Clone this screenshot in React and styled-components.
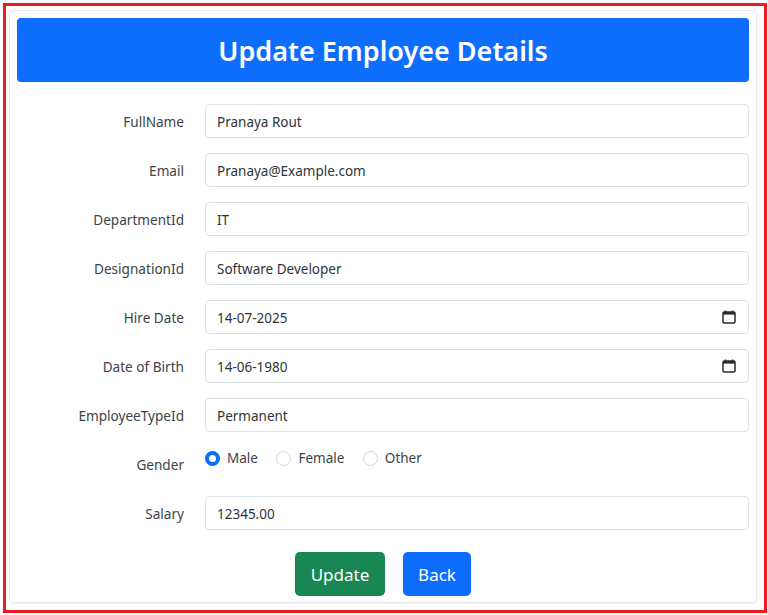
import React from 'react';
import styled, { createGlobalStyle } from 'styled-components';

const GlobalStyle = createGlobalStyle`
  html, body {
    margin: 0;
    padding: 0;
    background: #fff;
  }
  * {
    box-sizing: border-box;
  }
`

const Frame = styled.div`
  width: 764px;
  height: 610px;
  margin: 3px 0 0 3px;
  padding: 4px 7px 7px 3px;
  border: 3px solid #ed1c24;
  font-family: "Noto Sans", "Open Sans", sans-serif;
  color: #212529;
`

const Card = styled.div`
  height: 100%;
  padding: 7px;
  border: 1px solid #e6e8ea;
  border-radius: 4px;
  box-shadow: 0 1px 2px rgba(0, 0, 0, 0.06);
`

const Header = styled.h1`
  margin: 0 0 22px;
  height: 64px;
  display: flex;
  align-items: center;
  justify-content: center;
  background: #0d6efd;
  border-radius: 4px;
  color: #fff;
  font-size: 27px;
  font-weight: 600;
`

const Form = styled.form`
  display: grid;
  grid-template-columns: 167px 1fr;
  column-gap: 21px;
  row-gap: 15px;
`

const Label = styled.label`
  display: flex;
  align-items: center;
  justify-content: flex-end;
  height: 34px;
  font-size: 13.6px;
  color: #3d4348;
  ${props => props.$low && 'padding-top: 1px;'}
`

const InputWrap = styled.div`
  position: relative;
`

const Input = styled.input`
  display: block;
  width: 100%;
  height: 34px;
  padding: 1px 11px 0;
  border: 1px solid #dee2e6;
  border-radius: 4px;
  background: #fff;
  font-family: inherit;
  font-size: 13.5px;
  color: #2f3439;
  outline: none;
`

const CalendarIcon = styled.svg`
  position: absolute;
  top: 10px;
  right: 13px;
  width: 14px;
  height: 14px;
`

const Radios = styled.div`
  display: flex;
  align-items: flex-start;
  gap: 18.5px;
  height: 34px;
`

const RadioItem = styled.label`
  display: flex;
  align-items: center;
  gap: 7px;
  height: 22px;
  font-size: 13.5px;
  color: #3d4348;
`

const Radio = styled.input`
  appearance: none;
  margin: 0;
  width: 15px;
  height: 15px;
  border-radius: 50%;
  border: 1px solid #ced4da;
  background: #fff;

  &:checked {
    border: 4px solid #0d6efd;
  }
`

const Actions = styled.div`
  display: flex;
  justify-content: center;
  gap: 18px;
  margin-top: 22px;
`

const Button = styled.button`
  height: 44px;
  width: ${props => props.$width}px;
  padding: 0;
  border: none;
  border-radius: 5px;
  background: ${props => props.$color};
  color: #fff;
  font-family: inherit;
  font-size: 17px;
`

function Calendar() {
  return (
    <CalendarIcon viewBox="0 0 14 14" fill="none">
      <path d="M3.5 0.5v2M10.5 0.5v2" stroke="#2b2b2b" strokeWidth="1.4" />
      <rect x="1" y="2" width="12" height="11" rx="1.2" stroke="#2b2b2b" strokeWidth="1.5" />
      <rect x="1" y="2" width="12" height="2.6" fill="#2b2b2b" />
    </CalendarIcon>
  )
}

const fields = [
  { label: 'FullName', value: 'Pranaya Rout' },
  { label: 'Email', value: 'Pranaya@Example.com' },
  { label: 'DepartmentId', value: 'IT' },
  { label: 'DesignationId', value: 'Software Developer' },
  { label: 'Hire Date', value: '14-07-2025', date: true },
  { label: 'Date of Birth', value: '14-06-1980', date: true },
  { label: 'EmployeeTypeId', value: 'Permanent' },
]

export default function App() {
  return (
    <>
      <GlobalStyle />
      <Frame>
        <Card>
          <Header>Update Employee Details</Header>
          <Form onSubmit={e => e.preventDefault()}>
            {fields.map(f => (
              <React.Fragment key={f.label}>
                <Label>{f.label}</Label>
                <InputWrap>
                  <Input defaultValue={f.value} />
                  {f.date && <Calendar />}
                </InputWrap>
              </React.Fragment>
            ))}
            <Label $low>Gender</Label>
            <Radios>
              <RadioItem><Radio type="radio" name="gender" defaultChecked />Male</RadioItem>
              <RadioItem><Radio type="radio" name="gender" />Female</RadioItem>
              <RadioItem><Radio type="radio" name="gender" />Other</RadioItem>
            </Radios>
            <Label>Salary</Label>
            <InputWrap>
              <Input defaultValue="12345.00" />
            </InputWrap>
          </Form>
          <Actions>
            <Button $color="#198754" $width={90}>Update</Button>
            <Button $color="#0d6efd" $width={68}>Back</Button>
          </Actions>
        </Card>
      </Frame>
    </>
  )
}
